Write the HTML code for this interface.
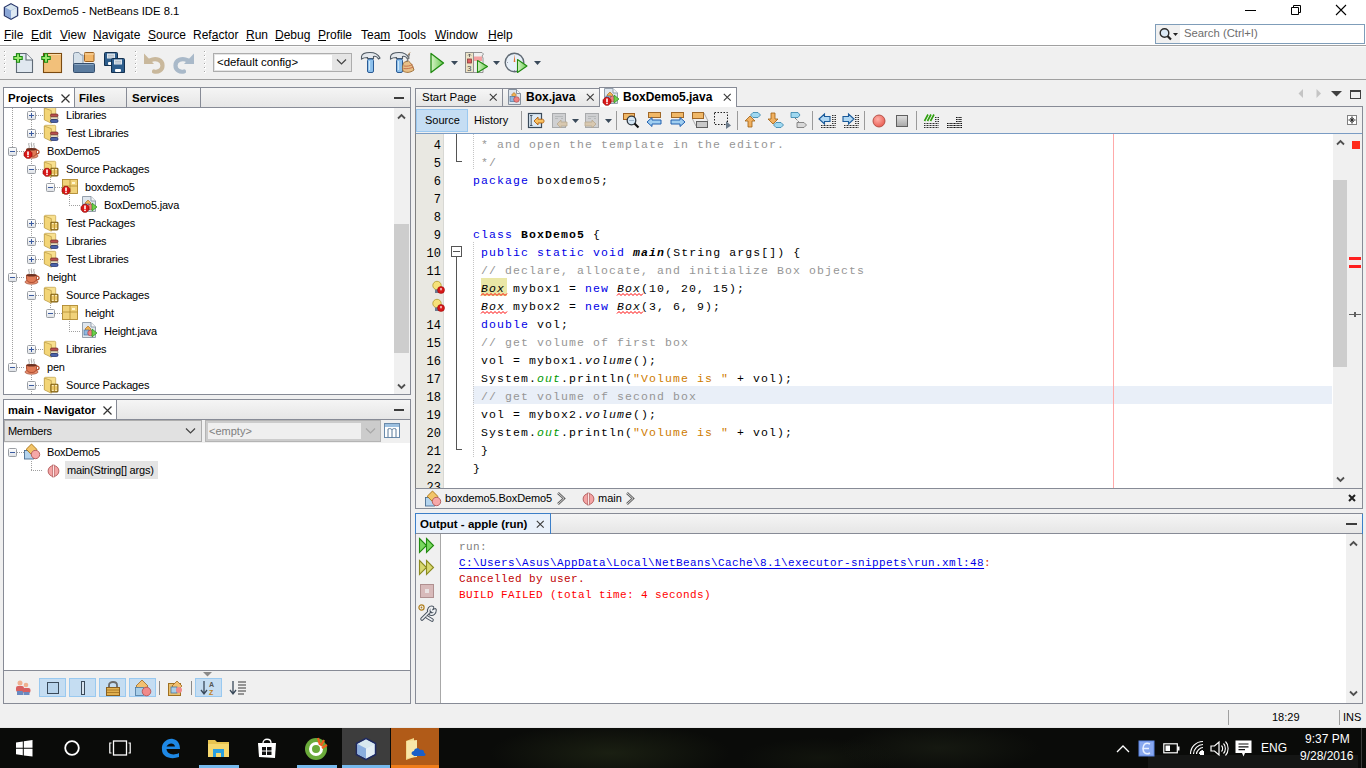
<!DOCTYPE html><html><head><meta charset="utf-8"><style>
*{margin:0;padding:0;box-sizing:border-box}
html,body{width:1366px;height:768px;overflow:hidden;background:#f0f0f0;font-family:"Liberation Sans",sans-serif;font-size:12px;color:#000}
.a{position:absolute}
.t{position:absolute;white-space:pre;line-height:14px;height:14px}
.b{font-weight:bold}
.u{text-decoration:underline}
.code{position:absolute;white-space:pre;font-family:"Liberation Mono",monospace;font-size:11.5px;letter-spacing:1.1px;line-height:18px;height:18px;padding-top:2px}
.out{position:absolute;white-space:pre;font-family:"Liberation Mono",monospace;font-size:11px;letter-spacing:0.4px;line-height:16px;height:16px}
.kw{color:#0000e6}
.cm{color:#969696}
.st{color:#ce7b00}
.fld{color:#009900;font-style:italic}
.ln{position:absolute;white-space:pre;font-family:"Liberation Mono",monospace;font-size:12px;letter-spacing:0px;line-height:18px;height:18px;padding-top:3px;text-align:right;width:26px;left:415px;color:#000}
.tree{font-size:11px;letter-spacing:-0.3px}
svg{position:absolute;overflow:visible}
</style></head><body>
<div class="a" style="left:0px;top:0px;width:1366px;height:45px;background:#fff"></div>
<svg style="left:3px;top:3px" width="16" height="17" viewBox="0 0 16 17"><path d="M8 0.8 L14.6 4.3 L14.6 12.7 L8 16.2 L1.4 12.7 L1.4 4.3 Z" fill="#9bb4d8" stroke="#2c3a6b" stroke-width="1.3"/><path d="M2.2 4.6 L8 7.6 L13.8 4.6 L8 1.6 Z" fill="#d6e4ee"/><path d="M8 7.8 L13.8 4.8 L13.8 12.3 L8 15.4Z" fill="#dfe9f2"/><path d="M2.2 4.8 L8 7.8 L8 15.4 L2.2 12.3Z" fill="#8aa6d6"/></svg>
<div class="t" style="left:23px;top:4px;font-size:11.3px;color:#000">BoxDemo5 - NetBeans IDE 8.1</div>
<div class="a" style="left:1245px;top:10px;width:11px;height:1px;background:#000"></div>
<svg style="left:1289px;top:4px" width="12" height="12" viewBox="0 0 12 12"><path d="M2.5 3.5 H9.5 V10.5 H2.5 Z M4.5 3.5 V1.5 H11.5 V8.5 H9.5" fill="none" stroke="#000" stroke-width="1"/></svg>
<svg style="left:1335px;top:4px" width="12" height="12" viewBox="0 0 12 12"><path d="M1 1 L11 11 M11 1 L1 11" stroke="#000" stroke-width="1.1"/></svg>
<div class="t" style="left:4px;top:28px;font-size:12px"><span class="u">F</span>ile</div>
<div class="t" style="left:31px;top:28px;font-size:12px"><span class="u">E</span>dit</div>
<div class="t" style="left:60px;top:28px;font-size:12px"><span class="u">V</span>iew</div>
<div class="t" style="left:93px;top:28px;font-size:12px"><span class="u">N</span>avigate</div>
<div class="t" style="left:148px;top:28px;font-size:12px"><span class="u">S</span>ource</div>
<div class="t" style="left:193px;top:28px;font-size:12px">Ref<span class="u">a</span>ctor</div>
<div class="t" style="left:246px;top:28px;font-size:12px"><span class="u">R</span>un</div>
<div class="t" style="left:275px;top:28px;font-size:12px"><span class="u">D</span>ebug</div>
<div class="t" style="left:318px;top:28px;font-size:12px"><span class="u">P</span>rofile</div>
<div class="t" style="left:361px;top:28px;font-size:12px">Tea<span class="u">m</span></div>
<div class="t" style="left:398px;top:28px;font-size:12px"><span class="u">T</span>ools</div>
<div class="t" style="left:435px;top:28px;font-size:12px"><span class="u">W</span>indow</div>
<div class="t" style="left:488px;top:28px;font-size:12px"><span class="u">H</span>elp</div>
<div class="a" style="left:1155px;top:24px;width:210px;height:20px;border:1px solid #7f9db9;background:#fff"></div>
<div class="a" style="left:1156px;top:25px;width:24px;height:18px;background:#f0f0f0"></div>
<svg style="left:1158px;top:27px" width="22" height="16" viewBox="0 0 22 16"><circle cx="6.5" cy="6" r="4.3" fill="#dce9f5" stroke="#2b2b2b" stroke-width="1.4"/><path d="M9.5 9 L13 12.5" stroke="#222" stroke-width="2.2"/><path d="M15 6 L20 6 L17.5 9 Z" fill="#222"/></svg>
<div class="t" style="left:1184px;top:26px;font-size:11.3px;color:#6d6d6d">Search (Ctrl+I)</div>
<div class="a" style="left:0px;top:45px;width:1366px;height:1px;background:#a0a0a0"></div>
<div class="a" style="left:0px;top:46px;width:1366px;height:33px;background:#f0f0f0"></div>
<div class="a" style="left:0px;top:46px;width:1366px;height:1px;background:#fafafa"></div>
<div class="a" style="left:0px;top:79px;width:1366px;height:1px;background:#a0a0a0"></div>
<div class="a" style="left:4px;top:51px;width:2px;height:2px;background:#a8a8a8;border-right:1px solid #fff;border-bottom:1px solid #fff;box-sizing:content-box;width:1px;height:1px"></div>
<div class="a" style="left:4px;top:55px;width:2px;height:2px;background:#a8a8a8;border-right:1px solid #fff;border-bottom:1px solid #fff;box-sizing:content-box;width:1px;height:1px"></div>
<div class="a" style="left:4px;top:59px;width:2px;height:2px;background:#a8a8a8;border-right:1px solid #fff;border-bottom:1px solid #fff;box-sizing:content-box;width:1px;height:1px"></div>
<div class="a" style="left:4px;top:63px;width:2px;height:2px;background:#a8a8a8;border-right:1px solid #fff;border-bottom:1px solid #fff;box-sizing:content-box;width:1px;height:1px"></div>
<div class="a" style="left:4px;top:67px;width:2px;height:2px;background:#a8a8a8;border-right:1px solid #fff;border-bottom:1px solid #fff;box-sizing:content-box;width:1px;height:1px"></div>
<div class="a" style="left:4px;top:71px;width:2px;height:2px;background:#a8a8a8;border-right:1px solid #fff;border-bottom:1px solid #fff;box-sizing:content-box;width:1px;height:1px"></div>
<div class="a" style="left:135px;top:51px;width:2px;height:2px;background:#a8a8a8;border-right:1px solid #fff;border-bottom:1px solid #fff;box-sizing:content-box;width:1px;height:1px"></div>
<div class="a" style="left:135px;top:55px;width:2px;height:2px;background:#a8a8a8;border-right:1px solid #fff;border-bottom:1px solid #fff;box-sizing:content-box;width:1px;height:1px"></div>
<div class="a" style="left:135px;top:59px;width:2px;height:2px;background:#a8a8a8;border-right:1px solid #fff;border-bottom:1px solid #fff;box-sizing:content-box;width:1px;height:1px"></div>
<div class="a" style="left:135px;top:63px;width:2px;height:2px;background:#a8a8a8;border-right:1px solid #fff;border-bottom:1px solid #fff;box-sizing:content-box;width:1px;height:1px"></div>
<div class="a" style="left:135px;top:67px;width:2px;height:2px;background:#a8a8a8;border-right:1px solid #fff;border-bottom:1px solid #fff;box-sizing:content-box;width:1px;height:1px"></div>
<div class="a" style="left:135px;top:71px;width:2px;height:2px;background:#a8a8a8;border-right:1px solid #fff;border-bottom:1px solid #fff;box-sizing:content-box;width:1px;height:1px"></div>
<div class="a" style="left:204px;top:51px;width:2px;height:2px;background:#a8a8a8;border-right:1px solid #fff;border-bottom:1px solid #fff;box-sizing:content-box;width:1px;height:1px"></div>
<div class="a" style="left:204px;top:55px;width:2px;height:2px;background:#a8a8a8;border-right:1px solid #fff;border-bottom:1px solid #fff;box-sizing:content-box;width:1px;height:1px"></div>
<div class="a" style="left:204px;top:59px;width:2px;height:2px;background:#a8a8a8;border-right:1px solid #fff;border-bottom:1px solid #fff;box-sizing:content-box;width:1px;height:1px"></div>
<div class="a" style="left:204px;top:63px;width:2px;height:2px;background:#a8a8a8;border-right:1px solid #fff;border-bottom:1px solid #fff;box-sizing:content-box;width:1px;height:1px"></div>
<div class="a" style="left:204px;top:67px;width:2px;height:2px;background:#a8a8a8;border-right:1px solid #fff;border-bottom:1px solid #fff;box-sizing:content-box;width:1px;height:1px"></div>
<div class="a" style="left:204px;top:71px;width:2px;height:2px;background:#a8a8a8;border-right:1px solid #fff;border-bottom:1px solid #fff;box-sizing:content-box;width:1px;height:1px"></div>
<svg style="left:13px;top:52px" width="22" height="22" viewBox="0 0 22 22"><path d="M3.5 1.5 H13 L19.5 8 V20.5 H3.5 Z" fill="#e0e8f0" stroke="#5f6a76" stroke-width="1.1"/><path d="M13 1.5 V8 H19.5" fill="#f4f7fa" stroke="#5f6a76" stroke-width="1.1"/><path d="M3.5 1.8 H6.5 V4.5 H9.2 V7.5 H6.5 V10.2 H3.5 V7.5 H0.8 V4.5 H3.5 Z" fill="#9ae870" stroke="#1a8a10" stroke-width="1.1"/></svg>
<svg style="left:41px;top:52px" width="22" height="22" viewBox="0 0 22 22"><rect x="2.5" y="1.5" width="18" height="19" fill="#f2c07a" stroke="#7a4a10" stroke-width="1.1"/><path d="M3 2.5 H20" stroke="#f8dcaa"/><path d="M3.5 1.8 H6.5 V4.5 H9.2 V7.5 H6.5 V10.2 H3.5 V7.5 H0.8 V4.5 H3.5 Z" fill="#9ae870" stroke="#1a8a10" stroke-width="1.1"/></svg>
<svg style="left:72px;top:51px" width="23" height="23" viewBox="0 0 23 23"><path d="M1.5 3.5 Q1.5 1.5 3.5 1.5 H7 L9 4 H11 V16 H1.5 Z" fill="#d6e1ea" stroke="#8494a6"/><rect x="12.5" y="1.5" width="9.5" height="9" rx="0.8" fill="#f2b668" stroke="#9a6020"/><path d="M12.5 3 H22" stroke="#f8d8a8"/><path d="M2.5 12.5 H21.5 Q22.5 12.5 22.5 13.5 V20.5 Q22.5 21.5 21.5 21.5 H2.5 Q1.5 21.5 1.5 20.5 V13.5 Q1.5 12.5 2.5 12.5Z" fill="#5b7c9f" stroke="#354f6e"/><path d="M2.5 13.5 H21.5" stroke="#8aa6c2"/></svg>
<svg style="left:103px;top:51px" width="24" height="24" viewBox="0 0 24 24"><path d="M1.5 2.5 Q1.5 1.5 2.5 1.5 H13.5 Q14.5 1.5 14.5 2.5 V14.5 H1.5Z" fill="#2d5d8c" stroke="#13304f"/><rect x="4" y="2.5" width="8" height="5" fill="#dfe7ee"/><path d="M5 4.3 H11 M5 6 H11" stroke="#9aa8b4" stroke-width="0.7"/><rect x="5" y="11" width="6" height="3" rx="1" fill="#fff"/><path d="M8.5 8.5 Q8.5 7.5 9.5 7.5 H20.5 Q21.5 7.5 21.5 8.5 V21.5 H8.5Z" fill="#2d5d8c" stroke="#13304f"/><rect x="11" y="8.5" width="8" height="5" fill="#dfe7ee"/><path d="M12 10.3 H18 M12 12 H18" stroke="#9aa8b4" stroke-width="0.7"/><rect x="12" y="18" width="6" height="3" rx="1" fill="#fff"/></svg>
<svg style="left:143px;top:52px" width="22" height="22" viewBox="0 0 22 22"><path d="M7 8.5 C13 5.5, 19.5 8, 19.5 13.5 C19.5 18, 15.5 20.5, 11 19.5" fill="none" stroke="#c9b89c" stroke-width="4.2" stroke-linecap="round"/><path d="M1 1.5 V12 H11 Z" fill="#c9b89c"/></svg>
<svg style="left:173px;top:52px" width="22" height="22" viewBox="0 0 22 22"><path d="M15 8.5 C9 5.5, 2.5 8, 2.5 13.5 C2.5 18, 6.5 20.5, 11 19.5" fill="none" stroke="#a9b9c9" stroke-width="4.2" stroke-linecap="round"/><path d="M21 1.5 V12 H11 Z" fill="#a9b9c9"/></svg>
<div class="a" style="left:213px;top:53px;width:139px;height:19px;border:1px solid #adadad;background:#e5e5e5"></div>
<div class="a" style="left:215px;top:55px;width:117px;height:15px;background:#fff"></div>
<div class="t" style="left:217px;top:55px;font-size:11.4px">&lt;default config&gt;</div>
<svg style="left:336px;top:58px" width="12" height="8" viewBox="0 0 12 8"><path d="M1 1.5 L5.5 6 L10 1.5" fill="none" stroke="#444" stroke-width="1.2"/></svg>
<svg style="left:360px;top:51px" width="22" height="23" viewBox="0 0 22 23"><path d="M1.5 5.5 C2 2.5, 6 1.5, 10 1.5 C14 1.5, 18 3, 20 7 L18.5 8 C17 5.5, 15 5, 13.5 5.5 L13.5 7.5 H7.5 L7.5 6.5 C5 6.5, 3 7, 1.5 8 Z" fill="#e4e8ec" stroke="#505a64" stroke-width="1.1"/><rect x="7.5" y="8" width="6" height="13.5" rx="1.5" fill="#8cc0ec" stroke="#2a5a94" stroke-width="1"/><path d="M9.5 10 V19" stroke="#d0e8f8" stroke-width="1.2"/></svg>
<svg style="left:389px;top:51px" width="26" height="23" viewBox="0 0 26 23"><path d="M1.5 5.5 C2 2.5, 6 1.5, 10 1.5 C14 1.5, 18 3, 20 7 L18.5 8 C17 5.5, 15 5, 13.5 5.5 L13.5 7.5 H7.5 L7.5 6.5 C5 6.5, 3 7, 1.5 8 Z" fill="#e4e8ec" stroke="#505a64" stroke-width="1.1"/><rect x="7.5" y="8" width="6" height="13.5" rx="1.5" fill="#8cc0ec" stroke="#2a5a94" stroke-width="1"/><path d="M9.5 10 V19" stroke="#d0e8f8" stroke-width="1.2"/><path d="M19 4 L21 1.5 M15.5 11 C14 12, 13 17, 14 20 C17 22, 21 22, 25 19 C24 15, 22 12, 19.5 10 Z" fill="#e8c088" stroke="#9a6a30" stroke-width="0.9"/><path d="M18 10.5 L20.5 3" stroke="#7a7a7a" stroke-width="1.3"/><path d="M15 15 C18 15.5, 21 15, 23.5 13.5 M14.5 17.5 C18 18, 21 17.5, 24.5 16" stroke="#c06040" stroke-width="0.8" fill="none"/></svg>
<svg style="left:429px;top:52px" width="16" height="22" viewBox="0 0 16 22"><defs><linearGradient id="rg" x1="0" y1="0" x2="1" y2="0"><stop offset="0" stop-color="#d8f4c8"/><stop offset="1" stop-color="#68c850"/></linearGradient></defs><path d="M2 1.5 L14.5 11 L2 20.5 Z" fill="url(#rg)" stroke="#1f8a10" stroke-width="1.3" stroke-linejoin="round"/></svg>
<svg style="left:451px;top:61px" width="7" height="5" viewBox="0 0 7 5"><path d="M0 0 H7 L3.5 4Z" fill="#3a4a5a"/></svg>
<svg style="left:464px;top:51px" width="26" height="23" viewBox="0 0 26 23"><path d="M1.5 1.5 H18 L19.5 3 L18 5 L19 7 V21.5 H1.5Z" fill="#f0f0f0" stroke="#8a8a8a" stroke-width="0.9"/><rect x="1.5" y="1.5" width="8" height="20" fill="#ece4c8" stroke="#8a8a8a" stroke-width="0.9"/><path d="M5.5 3 V6 M4 4.5 L5.5 3 L7 4.5" stroke="#555" stroke-width="0.8" fill="none"/><rect x="3.5" y="8" width="4" height="4" fill="#e06060" stroke="#8a3a3a" stroke-width="0.8"/><text x="3" y="20" font-size="8" font-family="Liberation Sans" fill="#444">3</text><path d="M10 5.5 H18 V10 H10Z" fill="#f4a0a0"/><path d="M13.5 9.5 L23.5 15.5 L13.5 21.5Z" fill="url(#rg)" stroke="#1f8a10" stroke-width="1.1" stroke-linejoin="round"/></svg>
<svg style="left:493px;top:61px" width="7" height="5" viewBox="0 0 7 5"><path d="M0 0 H7 L3.5 4Z" fill="#3a4a5a"/></svg>
<svg style="left:504px;top:51px" width="25" height="23" viewBox="0 0 25 23"><circle cx="10.5" cy="11.5" r="9.3" fill="#e8f0f8" stroke="#606a74" stroke-width="1.4"/><path d="M10.5 3.5 L9.7 11 H11.3 Z" fill="#e07030"/><path d="M3 11.5 H4 M17 11.5 H18 M10.5 19 V20" stroke="#889" stroke-width="0.8"/><path d="M13.5 8.5 L23 15 L13.5 21.5Z" fill="url(#rg)" stroke="#1f8a10" stroke-width="1.1" stroke-linejoin="round"/></svg>
<svg style="left:534px;top:61px" width="7" height="5" viewBox="0 0 7 5"><path d="M0 0 H7 L3.5 4Z" fill="#3a4a5a"/></svg>
<div class="a" style="left:3px;top:87px;width:408px;height:308px;border:1px solid #878b96;background:#fff"></div>
<div class="a" style="left:12px;top:108px;width:1px;height:259px;background:repeating-linear-gradient(180deg,#a0a0a0 0 1px,transparent 1px 2px)"></div>
<div class="a" style="left:31px;top:108px;width:1px;height:25px;background:repeating-linear-gradient(180deg,#a0a0a0 0 1px,transparent 1px 2px)"></div>
<div class="a" style="left:31px;top:155px;width:1px;height:104px;background:repeating-linear-gradient(180deg,#a0a0a0 0 1px,transparent 1px 2px)"></div>
<div class="a" style="left:50px;top:173px;width:1px;height:14px;background:repeating-linear-gradient(180deg,#a0a0a0 0 1px,transparent 1px 2px)"></div>
<div class="a" style="left:31px;top:281px;width:1px;height:68px;background:repeating-linear-gradient(180deg,#a0a0a0 0 1px,transparent 1px 2px)"></div>
<div class="a" style="left:50px;top:299px;width:1px;height:14px;background:repeating-linear-gradient(180deg,#a0a0a0 0 1px,transparent 1px 2px)"></div>
<div class="a" style="left:31px;top:371px;width:1px;height:23px;background:repeating-linear-gradient(180deg,#a0a0a0 0 1px,transparent 1px 2px)"></div>
<div class="a" style="left:36px;top:115px;width:7px;height:1px;background:repeating-linear-gradient(90deg,#a0a0a0 0 1px,transparent 1px 2px)"></div>
<svg style="left:43px;top:106px" width="17" height="17" viewBox="0 0 17 17"><rect x="1.5" y="1.3" width="11.2" height="12.5" rx="1" fill="#f8e08e" stroke="#c9a955" stroke-width="0.8"/><path d="M1.3 2 L8.3 4.6 V17.2 L1.3 13.8 Z" fill="#f3d577" stroke="#bf9f4a" stroke-width="0.8"/><rect x="7.5" y="8" width="7.5" height="3" rx="1.3" fill="#b85050" stroke="#6a2020" stroke-width="0.7"/><rect x="7.5" y="11" width="7.5" height="2.5" rx="1.1" fill="#e8dcc0" stroke="#7a6a4a" stroke-width="0.6"/><rect x="7.5" y="13.5" width="7.5" height="3" rx="1.3" fill="#4a62a8" stroke="#1a2a6a" stroke-width="0.7"/></svg>
<div class="t" style="left:66px;top:108px;font-size:11px;letter-spacing:-0.2px">Libraries</div>
<div class="a" style="left:36px;top:133px;width:7px;height:1px;background:repeating-linear-gradient(90deg,#a0a0a0 0 1px,transparent 1px 2px)"></div>
<svg style="left:43px;top:124px" width="17" height="17" viewBox="0 0 17 17"><rect x="1.5" y="1.3" width="11.2" height="12.5" rx="1" fill="#f8e08e" stroke="#c9a955" stroke-width="0.8"/><path d="M1.3 2 L8.3 4.6 V17.2 L1.3 13.8 Z" fill="#f3d577" stroke="#bf9f4a" stroke-width="0.8"/><rect x="7.5" y="8" width="7.5" height="3" rx="1.3" fill="#b85050" stroke="#6a2020" stroke-width="0.7"/><rect x="7.5" y="11" width="7.5" height="2.5" rx="1.1" fill="#e8dcc0" stroke="#7a6a4a" stroke-width="0.6"/><rect x="7.5" y="13.5" width="7.5" height="3" rx="1.3" fill="#4a62a8" stroke="#1a2a6a" stroke-width="0.7"/></svg>
<div class="t" style="left:66px;top:126px;font-size:11px;letter-spacing:-0.2px">Test Libraries</div>
<div class="a" style="left:17px;top:151px;width:7px;height:1px;background:repeating-linear-gradient(90deg,#a0a0a0 0 1px,transparent 1px 2px)"></div>
<svg style="left:24px;top:142px" width="17" height="17" viewBox="0 0 17 17"><ellipse cx="7.5" cy="14" rx="6.5" ry="2.2" fill="#e89070" stroke="#a04a30" stroke-width="0.7"/><path d="M2.5 7 H12.5 V10 C12.5 13.5,10.5 14.5,7.5 14.5 C4.5 14.5,2.5 13.5,2.5 10 Z" fill="#e07a55" stroke="#9a3a20" stroke-width="0.8"/><path d="M12.5 8 C16 8,16 12,12 12" fill="none" stroke="#b05030" stroke-width="1.3"/><ellipse cx="7.5" cy="7.2" rx="5" ry="1.3" fill="#6a3020"/><path d="M5 1 C4 3,6 4,5 6 M7.5 0.5 C6.5 2.5,8.5 3.5,7.5 5.5 M10 1 C9 3,11 4,10 6" fill="none" stroke="#8a8a8a" stroke-width="0.8"/><g transform="translate(0,8)"><path d="M2.5 0.3 H5.5 L8 2.8 V5.8 L5.5 8.3 H2.5 L0 5.8 V2.8 Z" fill="#d81818" stroke="#8a0000" stroke-width="0.6"/><rect x="3.2" y="1.5" width="1.6" height="3.6" fill="#fff"/><rect x="3.2" y="5.7" width="1.6" height="1.4" fill="#fff"/></g></svg>
<div class="t" style="left:47px;top:144px;font-size:11px;letter-spacing:-0.2px">BoxDemo5</div>
<div class="a" style="left:36px;top:169px;width:7px;height:1px;background:repeating-linear-gradient(90deg,#a0a0a0 0 1px,transparent 1px 2px)"></div>
<svg style="left:43px;top:160px" width="17" height="17" viewBox="0 0 17 17"><rect x="1.5" y="1.3" width="11.2" height="12.5" rx="1" fill="#f8e08e" stroke="#c9a955" stroke-width="0.8"/><path d="M1.3 2 L8.3 4.6 V17.2 L1.3 13.8 Z" fill="#f3d577" stroke="#bf9f4a" stroke-width="0.8"/><rect x="7.9" y="8.3" width="7" height="7.6" rx="0.8" fill="#ecc868" stroke="#7a5a10" stroke-width="1.1"/><path d="M11.4 8.5 V15.8" stroke="#a07a20" stroke-width="0.7"/><path d="M9 9.6 H10.6 M12.2 9.6 H14 M9 14.4 H10.6 M12.2 14.4 H14" stroke="#fff6d8" stroke-width="0.9"/><g transform="translate(0,8)"><path d="M2.5 0.3 H5.5 L8 2.8 V5.8 L5.5 8.3 H2.5 L0 5.8 V2.8 Z" fill="#d81818" stroke="#8a0000" stroke-width="0.6"/><rect x="3.2" y="1.5" width="1.6" height="3.6" fill="#fff"/><rect x="3.2" y="5.7" width="1.6" height="1.4" fill="#fff"/></g></svg>
<div class="t" style="left:66px;top:162px;font-size:11px;letter-spacing:-0.2px">Source Packages</div>
<div class="a" style="left:55px;top:187px;width:7px;height:1px;background:repeating-linear-gradient(90deg,#a0a0a0 0 1px,transparent 1px 2px)"></div>
<svg style="left:62px;top:178px" width="17" height="17" viewBox="0 0 17 17"><rect x="0.5" y="1.5" width="15" height="14" fill="#f0d27a" stroke="#b08a30" stroke-width="0.9"/><path d="M8 1.5 V15.5 M0.5 8 H15.5" stroke="#b08a30" stroke-width="0.8"/><rect x="10" y="4" width="3" height="2" fill="#fff6d0"/><g transform="translate(0,8)"><path d="M2.5 0.3 H5.5 L8 2.8 V5.8 L5.5 8.3 H2.5 L0 5.8 V2.8 Z" fill="#d81818" stroke="#8a0000" stroke-width="0.6"/><rect x="3.2" y="1.5" width="1.6" height="3.6" fill="#fff"/><rect x="3.2" y="5.7" width="1.6" height="1.4" fill="#fff"/></g></svg>
<div class="t" style="left:85px;top:180px;font-size:11px;letter-spacing:-0.2px">boxdemo5</div>
<div class="a" style="left:69px;top:195px;width:1px;height:10px;background:repeating-linear-gradient(180deg,#a0a0a0 0 1px,transparent 1px 2px)"></div>
<div class="a" style="left:69px;top:205px;width:11px;height:1px;background:repeating-linear-gradient(90deg,#a0a0a0 0 1px,transparent 1px 2px)"></div>
<svg style="left:81px;top:196px" width="17" height="17" viewBox="0 0 17 17"><path d="M1.5 0.5 H10 L14.5 5 V15.5 H1.5 Z" fill="#dfe6ee" stroke="#8a96a4" stroke-width="0.9"/><path d="M10 0.5 V5 H14.5" fill="#f4f6f8" stroke="#8a96a4" stroke-width="0.9"/><path d="M7 4 L10 7 L7 10 L4 7Z" fill="#f0b050" stroke="#a06010" stroke-width="0.6"/><rect x="3" y="8" width="5" height="5" fill="#90b8e0" stroke="#406890" stroke-width="0.6"/><circle cx="9.5" cy="11" r="2.8" fill="#f08080" stroke="#a04040" stroke-width="0.6"/><path d="M11 7 L16 11 L11 15Z" fill="#6fd04a" stroke="#2a8a1a" stroke-width="0.7"/><g transform="translate(0,8)"><path d="M2.5 0.3 H5.5 L8 2.8 V5.8 L5.5 8.3 H2.5 L0 5.8 V2.8 Z" fill="#d81818" stroke="#8a0000" stroke-width="0.6"/><rect x="3.2" y="1.5" width="1.6" height="3.6" fill="#fff"/><rect x="3.2" y="5.7" width="1.6" height="1.4" fill="#fff"/></g></svg>
<div class="t" style="left:104px;top:198px;font-size:11px;letter-spacing:-0.2px">BoxDemo5.java</div>
<div class="a" style="left:36px;top:223px;width:7px;height:1px;background:repeating-linear-gradient(90deg,#a0a0a0 0 1px,transparent 1px 2px)"></div>
<svg style="left:43px;top:214px" width="17" height="17" viewBox="0 0 17 17"><rect x="1.5" y="1.3" width="11.2" height="12.5" rx="1" fill="#f8e08e" stroke="#c9a955" stroke-width="0.8"/><path d="M1.3 2 L8.3 4.6 V17.2 L1.3 13.8 Z" fill="#f3d577" stroke="#bf9f4a" stroke-width="0.8"/><rect x="7.9" y="8.3" width="7" height="7.6" rx="0.8" fill="#ecc868" stroke="#7a5a10" stroke-width="1.1"/><path d="M11.4 8.5 V15.8" stroke="#a07a20" stroke-width="0.7"/><path d="M9 9.6 H10.6 M12.2 9.6 H14 M9 14.4 H10.6 M12.2 14.4 H14" stroke="#fff6d8" stroke-width="0.9"/></svg>
<div class="t" style="left:66px;top:216px;font-size:11px;letter-spacing:-0.2px">Test Packages</div>
<div class="a" style="left:36px;top:241px;width:7px;height:1px;background:repeating-linear-gradient(90deg,#a0a0a0 0 1px,transparent 1px 2px)"></div>
<svg style="left:43px;top:232px" width="17" height="17" viewBox="0 0 17 17"><rect x="1.5" y="1.3" width="11.2" height="12.5" rx="1" fill="#f8e08e" stroke="#c9a955" stroke-width="0.8"/><path d="M1.3 2 L8.3 4.6 V17.2 L1.3 13.8 Z" fill="#f3d577" stroke="#bf9f4a" stroke-width="0.8"/><rect x="7.5" y="8" width="7.5" height="3" rx="1.3" fill="#b85050" stroke="#6a2020" stroke-width="0.7"/><rect x="7.5" y="11" width="7.5" height="2.5" rx="1.1" fill="#e8dcc0" stroke="#7a6a4a" stroke-width="0.6"/><rect x="7.5" y="13.5" width="7.5" height="3" rx="1.3" fill="#4a62a8" stroke="#1a2a6a" stroke-width="0.7"/></svg>
<div class="t" style="left:66px;top:234px;font-size:11px;letter-spacing:-0.2px">Libraries</div>
<div class="a" style="left:36px;top:259px;width:7px;height:1px;background:repeating-linear-gradient(90deg,#a0a0a0 0 1px,transparent 1px 2px)"></div>
<svg style="left:43px;top:250px" width="17" height="17" viewBox="0 0 17 17"><rect x="1.5" y="1.3" width="11.2" height="12.5" rx="1" fill="#f8e08e" stroke="#c9a955" stroke-width="0.8"/><path d="M1.3 2 L8.3 4.6 V17.2 L1.3 13.8 Z" fill="#f3d577" stroke="#bf9f4a" stroke-width="0.8"/><rect x="7.5" y="8" width="7.5" height="3" rx="1.3" fill="#b85050" stroke="#6a2020" stroke-width="0.7"/><rect x="7.5" y="11" width="7.5" height="2.5" rx="1.1" fill="#e8dcc0" stroke="#7a6a4a" stroke-width="0.6"/><rect x="7.5" y="13.5" width="7.5" height="3" rx="1.3" fill="#4a62a8" stroke="#1a2a6a" stroke-width="0.7"/></svg>
<div class="t" style="left:66px;top:252px;font-size:11px;letter-spacing:-0.2px">Test Libraries</div>
<div class="a" style="left:17px;top:277px;width:7px;height:1px;background:repeating-linear-gradient(90deg,#a0a0a0 0 1px,transparent 1px 2px)"></div>
<svg style="left:24px;top:268px" width="17" height="17" viewBox="0 0 17 17"><ellipse cx="7.5" cy="14" rx="6.5" ry="2.2" fill="#e89070" stroke="#a04a30" stroke-width="0.7"/><path d="M2.5 7 H12.5 V10 C12.5 13.5,10.5 14.5,7.5 14.5 C4.5 14.5,2.5 13.5,2.5 10 Z" fill="#e07a55" stroke="#9a3a20" stroke-width="0.8"/><path d="M12.5 8 C16 8,16 12,12 12" fill="none" stroke="#b05030" stroke-width="1.3"/><ellipse cx="7.5" cy="7.2" rx="5" ry="1.3" fill="#6a3020"/><path d="M5 1 C4 3,6 4,5 6 M7.5 0.5 C6.5 2.5,8.5 3.5,7.5 5.5 M10 1 C9 3,11 4,10 6" fill="none" stroke="#8a8a8a" stroke-width="0.8"/></svg>
<div class="t" style="left:47px;top:270px;font-size:11px;letter-spacing:-0.2px">height</div>
<div class="a" style="left:36px;top:295px;width:7px;height:1px;background:repeating-linear-gradient(90deg,#a0a0a0 0 1px,transparent 1px 2px)"></div>
<svg style="left:43px;top:286px" width="17" height="17" viewBox="0 0 17 17"><rect x="1.5" y="1.3" width="11.2" height="12.5" rx="1" fill="#f8e08e" stroke="#c9a955" stroke-width="0.8"/><path d="M1.3 2 L8.3 4.6 V17.2 L1.3 13.8 Z" fill="#f3d577" stroke="#bf9f4a" stroke-width="0.8"/><rect x="7.9" y="8.3" width="7" height="7.6" rx="0.8" fill="#ecc868" stroke="#7a5a10" stroke-width="1.1"/><path d="M11.4 8.5 V15.8" stroke="#a07a20" stroke-width="0.7"/><path d="M9 9.6 H10.6 M12.2 9.6 H14 M9 14.4 H10.6 M12.2 14.4 H14" stroke="#fff6d8" stroke-width="0.9"/></svg>
<div class="t" style="left:66px;top:288px;font-size:11px;letter-spacing:-0.2px">Source Packages</div>
<div class="a" style="left:55px;top:313px;width:7px;height:1px;background:repeating-linear-gradient(90deg,#a0a0a0 0 1px,transparent 1px 2px)"></div>
<svg style="left:62px;top:304px" width="17" height="17" viewBox="0 0 17 17"><rect x="0.5" y="1.5" width="15" height="14" fill="#f0d27a" stroke="#b08a30" stroke-width="0.9"/><path d="M8 1.5 V15.5 M0.5 8 H15.5" stroke="#b08a30" stroke-width="0.8"/><rect x="10" y="4" width="3" height="2" fill="#fff6d0"/></svg>
<div class="t" style="left:85px;top:306px;font-size:11px;letter-spacing:-0.2px">height</div>
<div class="a" style="left:69px;top:321px;width:1px;height:10px;background:repeating-linear-gradient(180deg,#a0a0a0 0 1px,transparent 1px 2px)"></div>
<div class="a" style="left:69px;top:331px;width:11px;height:1px;background:repeating-linear-gradient(90deg,#a0a0a0 0 1px,transparent 1px 2px)"></div>
<svg style="left:81px;top:322px" width="17" height="17" viewBox="0 0 17 17"><path d="M1.5 0.5 H10 L14.5 5 V15.5 H1.5 Z" fill="#dfe6ee" stroke="#8a96a4" stroke-width="0.9"/><path d="M10 0.5 V5 H14.5" fill="#f4f6f8" stroke="#8a96a4" stroke-width="0.9"/><path d="M7 4 L10 7 L7 10 L4 7Z" fill="#f0b050" stroke="#a06010" stroke-width="0.6"/><rect x="3" y="8" width="5" height="5" fill="#90b8e0" stroke="#406890" stroke-width="0.6"/><circle cx="9.5" cy="11" r="2.8" fill="#f08080" stroke="#a04040" stroke-width="0.6"/><path d="M11 7 L16 11 L11 15Z" fill="#6fd04a" stroke="#2a8a1a" stroke-width="0.7"/></svg>
<div class="t" style="left:104px;top:324px;font-size:11px;letter-spacing:-0.2px">Height.java</div>
<div class="a" style="left:36px;top:349px;width:7px;height:1px;background:repeating-linear-gradient(90deg,#a0a0a0 0 1px,transparent 1px 2px)"></div>
<svg style="left:43px;top:340px" width="17" height="17" viewBox="0 0 17 17"><rect x="1.5" y="1.3" width="11.2" height="12.5" rx="1" fill="#f8e08e" stroke="#c9a955" stroke-width="0.8"/><path d="M1.3 2 L8.3 4.6 V17.2 L1.3 13.8 Z" fill="#f3d577" stroke="#bf9f4a" stroke-width="0.8"/><rect x="7.5" y="8" width="7.5" height="3" rx="1.3" fill="#b85050" stroke="#6a2020" stroke-width="0.7"/><rect x="7.5" y="11" width="7.5" height="2.5" rx="1.1" fill="#e8dcc0" stroke="#7a6a4a" stroke-width="0.6"/><rect x="7.5" y="13.5" width="7.5" height="3" rx="1.3" fill="#4a62a8" stroke="#1a2a6a" stroke-width="0.7"/></svg>
<div class="t" style="left:66px;top:342px;font-size:11px;letter-spacing:-0.2px">Libraries</div>
<div class="a" style="left:17px;top:367px;width:7px;height:1px;background:repeating-linear-gradient(90deg,#a0a0a0 0 1px,transparent 1px 2px)"></div>
<svg style="left:24px;top:358px" width="17" height="17" viewBox="0 0 17 17"><ellipse cx="7.5" cy="14" rx="6.5" ry="2.2" fill="#e89070" stroke="#a04a30" stroke-width="0.7"/><path d="M2.5 7 H12.5 V10 C12.5 13.5,10.5 14.5,7.5 14.5 C4.5 14.5,2.5 13.5,2.5 10 Z" fill="#e07a55" stroke="#9a3a20" stroke-width="0.8"/><path d="M12.5 8 C16 8,16 12,12 12" fill="none" stroke="#b05030" stroke-width="1.3"/><ellipse cx="7.5" cy="7.2" rx="5" ry="1.3" fill="#6a3020"/><path d="M5 1 C4 3,6 4,5 6 M7.5 0.5 C6.5 2.5,8.5 3.5,7.5 5.5 M10 1 C9 3,11 4,10 6" fill="none" stroke="#8a8a8a" stroke-width="0.8"/></svg>
<div class="t" style="left:47px;top:360px;font-size:11px;letter-spacing:-0.2px">pen</div>
<div class="a" style="left:36px;top:385px;width:7px;height:1px;background:repeating-linear-gradient(90deg,#a0a0a0 0 1px,transparent 1px 2px)"></div>
<svg style="left:43px;top:376px" width="17" height="17" viewBox="0 0 17 17"><rect x="1.5" y="1.3" width="11.2" height="12.5" rx="1" fill="#f8e08e" stroke="#c9a955" stroke-width="0.8"/><path d="M1.3 2 L8.3 4.6 V17.2 L1.3 13.8 Z" fill="#f3d577" stroke="#bf9f4a" stroke-width="0.8"/><rect x="7.9" y="8.3" width="7" height="7.6" rx="0.8" fill="#ecc868" stroke="#7a5a10" stroke-width="1.1"/><path d="M11.4 8.5 V15.8" stroke="#a07a20" stroke-width="0.7"/><path d="M9 9.6 H10.6 M12.2 9.6 H14 M9 14.4 H10.6 M12.2 14.4 H14" stroke="#fff6d8" stroke-width="0.9"/></svg>
<div class="t" style="left:66px;top:378px;font-size:11px;letter-spacing:-0.2px">Source Packages</div>
<svg style="left:27px;top:111px" width="9" height="9" viewBox="0 0 9 9"><defs><linearGradient id="eg" x1="0" y1="0" x2="0" y2="1"><stop offset="0" stop-color="#fff"/><stop offset="1" stop-color="#dde1e6"/></linearGradient></defs><rect x="0.5" y="0.5" width="8" height="8" rx="1" fill="url(#eg)" stroke="#9a9ea4"/><path d="M2 4.5 H7" stroke="#3b5ba0" stroke-width="1"/><path d="M4.5 2 V7" stroke="#3b5ba0" stroke-width="1"/></svg>
<svg style="left:27px;top:129px" width="9" height="9" viewBox="0 0 9 9"><defs><linearGradient id="eg" x1="0" y1="0" x2="0" y2="1"><stop offset="0" stop-color="#fff"/><stop offset="1" stop-color="#dde1e6"/></linearGradient></defs><rect x="0.5" y="0.5" width="8" height="8" rx="1" fill="url(#eg)" stroke="#9a9ea4"/><path d="M2 4.5 H7" stroke="#3b5ba0" stroke-width="1"/><path d="M4.5 2 V7" stroke="#3b5ba0" stroke-width="1"/></svg>
<svg style="left:8px;top:147px" width="9" height="9" viewBox="0 0 9 9"><defs><linearGradient id="eg" x1="0" y1="0" x2="0" y2="1"><stop offset="0" stop-color="#fff"/><stop offset="1" stop-color="#dde1e6"/></linearGradient></defs><rect x="0.5" y="0.5" width="8" height="8" rx="1" fill="url(#eg)" stroke="#9a9ea4"/><path d="M2 4.5 H7" stroke="#3b5ba0" stroke-width="1"/></svg>
<svg style="left:27px;top:165px" width="9" height="9" viewBox="0 0 9 9"><defs><linearGradient id="eg" x1="0" y1="0" x2="0" y2="1"><stop offset="0" stop-color="#fff"/><stop offset="1" stop-color="#dde1e6"/></linearGradient></defs><rect x="0.5" y="0.5" width="8" height="8" rx="1" fill="url(#eg)" stroke="#9a9ea4"/><path d="M2 4.5 H7" stroke="#3b5ba0" stroke-width="1"/></svg>
<svg style="left:46px;top:183px" width="9" height="9" viewBox="0 0 9 9"><defs><linearGradient id="eg" x1="0" y1="0" x2="0" y2="1"><stop offset="0" stop-color="#fff"/><stop offset="1" stop-color="#dde1e6"/></linearGradient></defs><rect x="0.5" y="0.5" width="8" height="8" rx="1" fill="url(#eg)" stroke="#9a9ea4"/><path d="M2 4.5 H7" stroke="#3b5ba0" stroke-width="1"/></svg>
<svg style="left:27px;top:219px" width="9" height="9" viewBox="0 0 9 9"><defs><linearGradient id="eg" x1="0" y1="0" x2="0" y2="1"><stop offset="0" stop-color="#fff"/><stop offset="1" stop-color="#dde1e6"/></linearGradient></defs><rect x="0.5" y="0.5" width="8" height="8" rx="1" fill="url(#eg)" stroke="#9a9ea4"/><path d="M2 4.5 H7" stroke="#3b5ba0" stroke-width="1"/><path d="M4.5 2 V7" stroke="#3b5ba0" stroke-width="1"/></svg>
<svg style="left:27px;top:237px" width="9" height="9" viewBox="0 0 9 9"><defs><linearGradient id="eg" x1="0" y1="0" x2="0" y2="1"><stop offset="0" stop-color="#fff"/><stop offset="1" stop-color="#dde1e6"/></linearGradient></defs><rect x="0.5" y="0.5" width="8" height="8" rx="1" fill="url(#eg)" stroke="#9a9ea4"/><path d="M2 4.5 H7" stroke="#3b5ba0" stroke-width="1"/><path d="M4.5 2 V7" stroke="#3b5ba0" stroke-width="1"/></svg>
<svg style="left:27px;top:255px" width="9" height="9" viewBox="0 0 9 9"><defs><linearGradient id="eg" x1="0" y1="0" x2="0" y2="1"><stop offset="0" stop-color="#fff"/><stop offset="1" stop-color="#dde1e6"/></linearGradient></defs><rect x="0.5" y="0.5" width="8" height="8" rx="1" fill="url(#eg)" stroke="#9a9ea4"/><path d="M2 4.5 H7" stroke="#3b5ba0" stroke-width="1"/><path d="M4.5 2 V7" stroke="#3b5ba0" stroke-width="1"/></svg>
<svg style="left:8px;top:273px" width="9" height="9" viewBox="0 0 9 9"><defs><linearGradient id="eg" x1="0" y1="0" x2="0" y2="1"><stop offset="0" stop-color="#fff"/><stop offset="1" stop-color="#dde1e6"/></linearGradient></defs><rect x="0.5" y="0.5" width="8" height="8" rx="1" fill="url(#eg)" stroke="#9a9ea4"/><path d="M2 4.5 H7" stroke="#3b5ba0" stroke-width="1"/></svg>
<svg style="left:27px;top:291px" width="9" height="9" viewBox="0 0 9 9"><defs><linearGradient id="eg" x1="0" y1="0" x2="0" y2="1"><stop offset="0" stop-color="#fff"/><stop offset="1" stop-color="#dde1e6"/></linearGradient></defs><rect x="0.5" y="0.5" width="8" height="8" rx="1" fill="url(#eg)" stroke="#9a9ea4"/><path d="M2 4.5 H7" stroke="#3b5ba0" stroke-width="1"/></svg>
<svg style="left:46px;top:309px" width="9" height="9" viewBox="0 0 9 9"><defs><linearGradient id="eg" x1="0" y1="0" x2="0" y2="1"><stop offset="0" stop-color="#fff"/><stop offset="1" stop-color="#dde1e6"/></linearGradient></defs><rect x="0.5" y="0.5" width="8" height="8" rx="1" fill="url(#eg)" stroke="#9a9ea4"/><path d="M2 4.5 H7" stroke="#3b5ba0" stroke-width="1"/></svg>
<svg style="left:27px;top:345px" width="9" height="9" viewBox="0 0 9 9"><defs><linearGradient id="eg" x1="0" y1="0" x2="0" y2="1"><stop offset="0" stop-color="#fff"/><stop offset="1" stop-color="#dde1e6"/></linearGradient></defs><rect x="0.5" y="0.5" width="8" height="8" rx="1" fill="url(#eg)" stroke="#9a9ea4"/><path d="M2 4.5 H7" stroke="#3b5ba0" stroke-width="1"/><path d="M4.5 2 V7" stroke="#3b5ba0" stroke-width="1"/></svg>
<svg style="left:8px;top:363px" width="9" height="9" viewBox="0 0 9 9"><defs><linearGradient id="eg" x1="0" y1="0" x2="0" y2="1"><stop offset="0" stop-color="#fff"/><stop offset="1" stop-color="#dde1e6"/></linearGradient></defs><rect x="0.5" y="0.5" width="8" height="8" rx="1" fill="url(#eg)" stroke="#9a9ea4"/><path d="M2 4.5 H7" stroke="#3b5ba0" stroke-width="1"/></svg>
<svg style="left:27px;top:381px" width="9" height="9" viewBox="0 0 9 9"><defs><linearGradient id="eg" x1="0" y1="0" x2="0" y2="1"><stop offset="0" stop-color="#fff"/><stop offset="1" stop-color="#dde1e6"/></linearGradient></defs><rect x="0.5" y="0.5" width="8" height="8" rx="1" fill="url(#eg)" stroke="#9a9ea4"/><path d="M2 4.5 H7" stroke="#3b5ba0" stroke-width="1"/></svg>
<div class="a" style="left:3px;top:87px;width:408px;height:21px;border:1px solid #878b96;background:linear-gradient(#f5f5f5,#e6e6e6)"></div>
<div class="a" style="left:4px;top:88px;width:70px;height:19px;background:#fff"></div>
<div class="a" style="left:74px;top:88px;width:1px;height:19px;background:#878b96"></div>
<div class="a" style="left:126px;top:88px;width:1px;height:19px;background:#878b96"></div>
<div class="a" style="left:200px;top:88px;width:1px;height:19px;background:#878b96"></div>
<div class="t" style="left:8px;top:91px;font-size:11.5px;font-weight:bold">Projects</div>
<svg style="left:61px;top:94px" width="9" height="9" viewBox="0 0 9 9"><path d="M0.5 0.5 L8.5 8.5 M8.5 0.5 L0.5 8.5" stroke="#333" stroke-width="1.2"/></svg>
<div class="t" style="left:79px;top:91px;font-size:11.5px;font-weight:bold">Files</div>
<div class="t" style="left:132px;top:91px;font-size:11.5px;font-weight:bold">Services</div>
<div class="a" style="left:394px;top:97px;width:10px;height:2px;background:#3c3c3c"></div>
<div class="a" style="left:394px;top:108px;width:16px;height:286px;background:#f0f0f0"></div>
<div class="a" style="left:394px;top:224px;width:15px;height:129px;background:#cdcdcd"></div>
<svg style="left:397px;top:113px" width="10" height="7" viewBox="0 0 10 7"><path d="M1 5.5 L4.5 2 L8 5.5" fill="none" stroke="#505050" stroke-width="1.8"/></svg>
<svg style="left:397px;top:383px" width="10" height="7" viewBox="0 0 10 7"><path d="M1 1.5 L4.5 5 L8 1.5" fill="none" stroke="#505050" stroke-width="1.8"/></svg>
<div class="a" style="left:3px;top:87px;width:408px;height:308px;border:1px solid #878b96"></div>
<div class="a" style="left:3px;top:399px;width:408px;height:305px;border:1px solid #878b96;background:#fff"></div>
<div class="a" style="left:3px;top:399px;width:408px;height:21px;border:1px solid #878b96;background:linear-gradient(#f5f5f5,#e6e6e6)"></div>
<div class="a" style="left:4px;top:400px;width:112px;height:19px;background:#fff"></div>
<div class="a" style="left:116px;top:400px;width:1px;height:19px;background:#878b96"></div>
<div class="t" style="left:8px;top:403px;font-size:11.2px;font-weight:bold">main - Navigator</div>
<svg style="left:103px;top:406px" width="9" height="9" viewBox="0 0 9 9"><path d="M0.5 0.5 L8.5 8.5 M8.5 0.5 L0.5 8.5" stroke="#333" stroke-width="1.2"/></svg>
<div class="a" style="left:394px;top:409px;width:10px;height:2px;background:#3c3c3c"></div>
<div class="a" style="left:4px;top:420px;width:406px;height:23px;background:#f0f0f0"></div>
<div class="a" style="left:4px;top:420px;width:198px;height:22px;border:1px solid #adadad;background:#e1e1e1"></div>
<div class="t" style="left:8px;top:424px;font-size:11px;letter-spacing:-0.3px">Members</div>
<svg style="left:185px;top:427px" width="12" height="8" viewBox="0 0 12 8"><path d="M1 1.5 L5.5 6 L10 1.5" fill="none" stroke="#444" stroke-width="1.2"/></svg>
<div class="a" style="left:205px;top:420px;width:176px;height:22px;border:1px solid #b4b4b4;background:#cccccc"></div>
<div class="a" style="left:208px;top:423px;width:153px;height:16px;background:#efefef"></div>
<div class="t" style="left:209px;top:424px;font-size:11px;color:#808080">&lt;empty&gt;</div>
<svg style="left:365px;top:427px" width="12" height="8" viewBox="0 0 12 8"><path d="M1 1.5 L5.5 6 L10 1.5" fill="none" stroke="#a8a8a8" stroke-width="1.2"/></svg>
<svg style="left:384px;top:423px" width="17" height="16" viewBox="0 0 17 16"><rect x="0.5" y="0.5" width="15" height="14" fill="#fff" stroke="#6a8aaa"/><rect x="1" y="1" width="14" height="3" fill="#9cc0e0"/><path d="M4 6 V14 M12 6 V14 M8 7 V15" stroke="#5a7a9a"/><path d="M4 6 C6 5,8 6,8 7 C8 6,10 5,12 6" fill="none" stroke="#5a7a9a"/></svg>
<div class="a" style="left:17px;top:452px;width:7px;height:1px;background:repeating-linear-gradient(90deg,#a0a0a0 0 1px,transparent 1px 2px)"></div>
<div class="a" style="left:31px;top:461px;width:1px;height:9px;background:repeating-linear-gradient(180deg,#a0a0a0 0 1px,transparent 1px 2px)"></div>
<div class="a" style="left:31px;top:470px;width:11px;height:1px;background:repeating-linear-gradient(90deg,#a0a0a0 0 1px,transparent 1px 2px)"></div>
<svg style="left:8px;top:448px" width="9" height="9" viewBox="0 0 9 9"><defs><linearGradient id="eg" x1="0" y1="0" x2="0" y2="1"><stop offset="0" stop-color="#fff"/><stop offset="1" stop-color="#dde1e6"/></linearGradient></defs><rect x="0.5" y="0.5" width="8" height="8" rx="1" fill="url(#eg)" stroke="#9a9ea4"/><path d="M2 4.5 H7" stroke="#3b5ba0" stroke-width="1"/></svg>
<svg style="left:24px;top:443px" width="17" height="17" viewBox="0 0 17 17"><rect x="0.5" y="7.5" width="9" height="8.5" fill="#b4d4ee" stroke="#4a6e92" stroke-width="0.9"/><path d="M7.5 1 L12.8 6.3 L7.5 11.6 L2.2 6.3Z" fill="#f2c468" stroke="#a87010" stroke-width="0.9"/><circle cx="11.5" cy="11.5" r="4.2" fill="#f6a8a8" stroke="#b05858" stroke-width="0.9"/></svg>
<div class="t" style="left:47px;top:445px;font-size:11px;letter-spacing:-0.2px">BoxDemo5</div>
<svg style="left:47px;top:464px" width="13" height="13" viewBox="0 0 13 13"><circle cx="6.5" cy="7" r="5.4" fill="#f4a4a4" stroke="#b05858" stroke-width="0.9"/><rect x="5.6" y="1" width="1.8" height="12" fill="#fde6e6" stroke="#b05858" stroke-width="0.6"/></svg>
<div class="a" style="left:65px;top:461px;width:93px;height:18px;background:#e4e4e4"></div>
<div class="t" style="left:67px;top:463px;font-size:11px;letter-spacing:-0.2px">main(String[] args)</div>
<div class="a" style="left:4px;top:670px;width:406px;height:1px;background:#878b96"></div>
<div class="a" style="left:4px;top:671px;width:406px;height:32px;background:#f0f0f0"></div>
<div class="a" style="left:39px;top:678px;width:27px;height:19px;border:1px solid #99c9f0;background:#c5ddf2"></div>
<div class="a" style="left:69px;top:678px;width:27px;height:19px;border:1px solid #99c9f0;background:#c5ddf2"></div>
<div class="a" style="left:99px;top:678px;width:27px;height:19px;border:1px solid #99c9f0;background:#c5ddf2"></div>
<div class="a" style="left:129px;top:678px;width:27px;height:19px;border:1px solid #99c9f0;background:#c5ddf2"></div>
<div class="a" style="left:195px;top:678px;width:27px;height:19px;border:1px solid #99c9f0;background:#c5ddf2"></div>
<svg style="left:14px;top:680px" width="18" height="16" viewBox="0 0 18 16"><circle cx="6" cy="3" r="2.5" fill="#f0b090"/><rect x="2" y="6" width="8" height="6" rx="2" fill="#d86060"/><rect x="3" y="11" width="6" height="4" fill="#6a8ac0"/><circle cx="12" cy="5" r="2.3" fill="#f0b090"/><rect x="8.5" y="8" width="8" height="5" rx="2" fill="#d86060"/><rect x="9.5" y="12" width="6" height="3" fill="#6a8ac0"/></svg>
<svg style="left:46px;top:681px" width="14" height="14" viewBox="0 0 14 14"><rect x="1.5" y="1.5" width="11" height="11" fill="#b8d4ec" stroke="#3a4a5a" stroke-width="1"/></svg>
<svg style="left:80px;top:681px" width="6" height="14" viewBox="0 0 6 14"><rect x="1.5" y="0.5" width="3" height="13" fill="#d8e4f0" stroke="#3a4a5a" stroke-width="1"/></svg>
<svg style="left:105px;top:680px" width="16" height="16" viewBox="0 0 16 16"><path d="M4 8 V5 C4 1,12 1,12 5 V8" fill="none" stroke="#6a6a6a" stroke-width="1.8"/><rect x="1.5" y="7.5" width="13" height="8" fill="#e0b050" stroke="#8a6020"/><path d="M2 10 H14 M2 12.5 H14" stroke="#a07020" stroke-width="0.8"/></svg>
<svg style="left:134px;top:679px" width="18" height="18" viewBox="0 0 18 18"><path d="M8 1 L14 7 L8 13 L2 7 Z" fill="#f2c070" stroke="#a06a20" stroke-width="0.8"/><rect x="1.5" y="8.5" width="8" height="8" fill="#a8cde8" stroke="#4a78a0" stroke-width="0.8"/><circle cx="12.5" cy="12.5" r="4.3" fill="#f08a8a" stroke="#b04848" stroke-width="0.8"/></svg>
<div class="a" style="left:159px;top:681px;width:1px;height:14px;background:#8a8a8a"></div>
<svg style="left:167px;top:680px" width="17" height="16" viewBox="0 0 17 16"><rect x="1.5" y="3.5" width="12" height="12" fill="#e8c070" stroke="#a07020"/><path d="M10 1 L15 6 L10 11 L5 6 Z" fill="#f2c070" stroke="#a06a20" stroke-width="0.8"/><rect x="4" y="7" width="6" height="6" fill="#a8cde8" stroke="#4a78a0" stroke-width="0.8"/><circle cx="12" cy="10" r="3" fill="#f08a8a"/></svg>
<div class="a" style="left:191px;top:681px;width:1px;height:14px;background:#8a8a8a"></div>
<svg style="left:203px;top:672px" width="9" height="5" viewBox="0 0 9 5"><path d="M0 0 H9 L4.5 4.5 Z" fill="#8a8a8a"/></svg>
<svg style="left:200px;top:680px" width="18" height="16" viewBox="0 0 18 16"><path d="M4 1 V13 M1 10 L4 14 L7 10" fill="none" stroke="#3a4a5a" stroke-width="1.3"/><text x="9" y="7" font-size="7" font-family="Liberation Sans" font-weight="bold" fill="#555">A</text><text x="9" y="15" font-size="7" font-family="Liberation Sans" font-weight="bold" fill="#c08020">Z</text></svg>
<svg style="left:229px;top:680px" width="19" height="16" viewBox="0 0 19 16"><path d="M4 1 V13 M1 10 L4 14 L7 10" fill="none" stroke="#3a4a5a" stroke-width="1.3"/><path d="M9 2 H17 M9 5 H17 M9 8 H17 M9 11 H17 M9 14 H15" stroke="#3a3a3a" stroke-width="1.2"/></svg>
<div class="a" style="left:3px;top:399px;width:408px;height:305px;border:1px solid #878b96"></div>
<div class="a" style="left:415px;top:88px;width:88px;height:19px;border:1px solid #878b96;background:linear-gradient(#f6f6f6,#e6e6e6)"></div>
<div class="a" style="left:502px;top:88px;width:98px;height:19px;border:1px solid #878b96;background:linear-gradient(#f6f6f6,#e6e6e6)"></div>
<div class="a" style="left:599px;top:87px;width:138px;height:20px;border:1px solid #878b96;border-bottom:none;background:#fff"></div>
<div class="t" style="left:422px;top:90px;font-size:11.5px">Start Page</div>
<svg style="left:489px;top:93px" width="9" height="9" viewBox="0 0 9 9"><path d="M0.8 0.8 L7.7 7.7 M7.7 0.8 L0.8 7.7" stroke="#3a3a3a" stroke-width="1.1"/></svg>
<svg style="left:507px;top:89px" width="15" height="16" viewBox="0 0 15 16"><path d="M1.5 0.5 H9.5 L13.5 4.5 V15.5 H1.5 Z" fill="#dfe6ee" stroke="#7a8694" stroke-width="0.9"/><path d="M9.5 0.5 V4.5 H13.5" fill="#f4f6f8" stroke="#7a8694" stroke-width="0.9"/><path d="M7 3.5 L9.5 6 L7 8.5 L4.5 6Z" fill="#f0b050" stroke="#a06010" stroke-width="0.6"/><rect x="3" y="7.5" width="5" height="5" fill="#90b8e0" stroke="#406890" stroke-width="0.6"/><circle cx="9.5" cy="10.5" r="2.8" fill="#f08080" stroke="#a04040" stroke-width="0.6"/></svg>
<div class="t" style="left:526px;top:90px;font-size:12px;font-weight:bold">Box.java</div>
<svg style="left:586px;top:93px" width="9" height="9" viewBox="0 0 9 9"><path d="M0.8 0.8 L7.7 7.7 M7.7 0.8 L0.8 7.7" stroke="#3a3a3a" stroke-width="1.1"/></svg>
<svg style="left:603px;top:88px" width="18" height="18" viewBox="0 0 18 18"><path d="M1.5 0.5 H10 L14.5 5 V15.5 H1.5 Z" fill="#dfe6ee" stroke="#8a96a4" stroke-width="0.9"/><path d="M10 0.5 V5 H14.5" fill="#f4f6f8" stroke="#8a96a4" stroke-width="0.9"/><path d="M7 4 L10 7 L7 10 L4 7Z" fill="#f0b050" stroke="#a06010" stroke-width="0.6"/><rect x="3" y="8" width="5" height="5" fill="#90b8e0" stroke="#406890" stroke-width="0.6"/><circle cx="9.5" cy="11" r="2.8" fill="#f08080" stroke="#a04040" stroke-width="0.6"/><path d="M11 7 L16 11 L11 15Z" fill="#6fd04a" stroke="#2a8a1a" stroke-width="0.7"/><g transform="translate(0,9)"><path d="M2.5 0.3 H5.5 L8 2.8 V5.8 L5.5 8.3 H2.5 L0 5.8 V2.8 Z" fill="#d81818" stroke="#8a0000" stroke-width="0.6"/><rect x="3.2" y="1.5" width="1.6" height="3.6" fill="#fff"/><rect x="3.2" y="5.7" width="1.6" height="1.4" fill="#fff"/></g></svg>
<div class="t" style="left:623px;top:90px;font-size:12px;font-weight:bold">BoxDemo5.java</div>
<svg style="left:723px;top:93px" width="9" height="9" viewBox="0 0 9 9"><path d="M0.8 0.8 L7.7 7.7 M7.7 0.8 L0.8 7.7" stroke="#3a3a3a" stroke-width="1.1"/></svg>
<svg style="left:1298px;top:89px" width="6" height="10" viewBox="0 0 6 10"><path d="M5 0 V9 L0.5 4.5Z" fill="#c4c4c4"/></svg>
<svg style="left:1316px;top:89px" width="6" height="10" viewBox="0 0 6 10"><path d="M0.5 0 V9 L5 4.5Z" fill="#c4c4c4"/></svg>
<svg style="left:1331px;top:91px" width="11" height="6" viewBox="0 0 11 6"><path d="M0 0 H11 L5.5 5.5Z" fill="#404040"/></svg>
<svg style="left:1350px;top:90px" width="11" height="9" viewBox="0 0 11 9"><rect x="0.5" y="0.5" width="10" height="8" fill="none" stroke="#404040"/><rect x="0.5" y="0.5" width="10" height="1.5" fill="#404040"/></svg>
<div class="a" style="left:415px;top:106px;width:948px;height:28px;border-left:1px solid #878b96;border-right:1px solid #878b96;background:#f0f0f0"></div>
<div class="a" style="left:600px;top:106px;width:136px;height:1px;background:#fff"></div>
<div class="a" style="left:415px;top:106px;width:185px;height:1px;background:#878b96"></div>
<div class="a" style="left:736px;top:106px;width:627px;height:1px;background:#878b96"></div>
<div class="a" style="left:416px;top:109px;width:52px;height:23px;border:1px solid #9ac8f0;background:#c5ddf3"></div>
<div class="t" style="left:425px;top:113px;font-size:11px">Source</div>
<div class="t" style="left:474px;top:113px;font-size:11px">History</div>
<div class="a" style="left:521px;top:111px;width:1px;height:19px;background:#9a9a9a"></div>
<div class="a" style="left:616px;top:111px;width:1px;height:19px;background:#9a9a9a"></div>
<div class="a" style="left:737px;top:111px;width:1px;height:19px;background:#9a9a9a"></div>
<div class="a" style="left:812px;top:111px;width:1px;height:19px;background:#9a9a9a"></div>
<div class="a" style="left:864px;top:111px;width:1px;height:19px;background:#9a9a9a"></div>
<div class="a" style="left:916px;top:111px;width:1px;height:19px;background:#9a9a9a"></div>
<svg style="left:527px;top:112px" width="19" height="17" viewBox="0 0 19 17"><rect x="1.5" y="1.5" width="13" height="14" fill="#dce9f4" stroke="#3a4a5a" stroke-width="1.2"/><path d="M3 3.5 H5.5 M4.2 3.5 V13.5 M3 13.5 H5.5" stroke="#3a4a5a" stroke-width="0.9"/><path d="M7 9 L11 5 V7.2 H15.5 C17.5 7.2,17.5 11,15.5 11 H11 V13 Z" fill="#f8c060" stroke="#b06010" stroke-width="0.9"/></svg>
<svg style="left:551px;top:112px" width="19" height="18" viewBox="0 0 19 18"><rect x="1.5" y="1.5" width="13" height="14" fill="#cfd0d2" stroke="#a8aaac" stroke-width="1"/><path d="M4 4.5 H12 M4 6.5 H7 M10 6.5 H12" stroke="#b0b2b4" stroke-width="0.8"/><path d="M6 12 L10 8 V10 H16 V14 H10 V16 Z" fill="#d8c8b0" stroke="#b8a890" stroke-width="0.8"/></svg>
<svg style="left:572px;top:119px" width="7" height="5" viewBox="0 0 7 5"><path d="M0 0 H7 L3.5 4Z" fill="#3a4a5a"/></svg>
<svg style="left:584px;top:112px" width="19" height="18" viewBox="0 0 19 18"><rect x="1.5" y="1.5" width="13" height="14" fill="#cfd0d2" stroke="#a8aaac" stroke-width="1"/><path d="M4 4.5 H12 M4 6.5 H7 M10 6.5 H12" stroke="#b0b2b4" stroke-width="0.8"/><path d="M12 12 L8 8 V10 H1 V14 H8 V16 Z" fill="#d8c8b0" stroke="#b8a890" stroke-width="0.8"/></svg>
<svg style="left:605px;top:119px" width="7" height="5" viewBox="0 0 7 5"><path d="M0 0 H7 L3.5 4Z" fill="#3a4a5a"/></svg>
<svg style="left:622px;top:112px" width="19" height="18" viewBox="0 0 19 18"><rect x="1.5" y="1.5" width="11" height="6" fill="#f0b868" stroke="#a06020" stroke-width="1"/><circle cx="9.5" cy="8.5" r="4.3" fill="#d4e6f4" stroke="#303840" stroke-width="1.3"/><path d="M7 8.5 H12" stroke="#90a8c0" stroke-width="0.8"/><path d="M12.5 11.5 L16.5 15.5" stroke="#101010" stroke-width="2.2"/></svg>
<svg style="left:646px;top:112px" width="17" height="16" viewBox="0 0 17 16"><rect x="2.5" y="0.5" width="12" height="5" fill="#f0b868" stroke="#a06828"/><path d="M1 10 L6 5.5 V8 H15 V12 H6 V14.5 Z" fill="#a0cef0" stroke="#2060b0"/></svg>
<svg style="left:669px;top:112px" width="17" height="16" viewBox="0 0 17 16"><rect x="2.5" y="0.5" width="12" height="5" fill="#f0b868" stroke="#a06828"/><path d="M16 10 L11 5.5 V8 H2 V12 H11 V14.5 Z" fill="#a0cef0" stroke="#2060b0"/></svg>
<svg style="left:692px;top:112px" width="17" height="16" viewBox="0 0 17 16"><rect x="0.5" y="0.5" width="11" height="6" fill="#f0b868" stroke="#a06828"/><rect x="4.5" y="9.5" width="11" height="6" fill="#c8c8c8" stroke="#606060"/><path d="M0.5 7 L4 14 M12 1 L16 9" stroke="#808080" stroke-width="0.6"/></svg>
<svg style="left:714px;top:112px" width="18" height="18" viewBox="0 0 18 18"><rect x="0.5" y="0.5" width="13" height="12" fill="none" stroke="#202020" stroke-dasharray="1.5 1.5"/><path d="M12 9 L17 13.5 L12 17Z" fill="#6a7a8a"/></svg>
<svg style="left:744px;top:112px" width="17" height="16" viewBox="0 0 17 16"><path d="M9 0.5 H14 L16.5 3 L14 5.5 H9 L6.5 3Z" fill="#a0d8f0" stroke="#3080a8" stroke-width="0.8"/><path d="M6 4 L11 9 H8 V15 H4 V9 H1 Z" fill="#f0b060" stroke="#a06010" stroke-width="0.8"/></svg>
<svg style="left:767px;top:112px" width="17" height="16" viewBox="0 0 17 16"><path d="M9 10.5 H14 L16.5 13 L14 15.5 H9 L6.5 13Z" fill="#a0d8f0" stroke="#3080a8" stroke-width="0.8"/><path d="M6 12 L11 7 H8 V1 H4 V7 H1 Z" fill="#f0b060" stroke="#a06010" stroke-width="0.8"/></svg>
<svg style="left:790px;top:112px" width="17" height="16" viewBox="0 0 17 16"><path d="M1 0.5 H8 L10 3 L8 5.5 H1Z" fill="#a0d8f0" stroke="#3080a8" stroke-width="0.8"/><path d="M7 10.5 H14 L16.5 13 L14 15.5 H7Z" fill="#d8d8d8" stroke="#707070" stroke-width="0.8"/><path d="M5 6 L9 10" stroke="#404040" stroke-dasharray="1 1"/></svg>
<svg style="left:818px;top:112px" width="18" height="18" viewBox="0 0 18 18"><path d="M1 7 L6.5 2 V4.5 H12 V9.5 H6.5 V12 Z" fill="#b0d8f4" stroke="#1a5a9a" stroke-width="1.1"/><path d="M14 3.5 H18 M14 5.5 H18 M14 7.5 H18 M14 9.5 H18 M14 11.5 H18 M3 13.5 H18 M3 15.5 H18" stroke="#303030" stroke-width="1" stroke-dasharray="1 0.5"/></svg>
<svg style="left:841px;top:112px" width="18" height="18" viewBox="0 0 18 18"><path d="M13 7 L7.5 2 V4.5 H2 V9.5 H7.5 V12 Z" fill="#b0d8f4" stroke="#1a5a9a" stroke-width="1.1"/><path d="M14 3.5 H18 M14 5.5 H18 M14 7.5 H18 M14 9.5 H18 M14 11.5 H18 M3 13.5 H18 M3 15.5 H18" stroke="#303030" stroke-width="1" stroke-dasharray="1 0.5"/></svg>
<svg style="left:872px;top:114px" width="14" height="14" viewBox="0 0 14 14"><defs><radialGradient id="rc" cx="0.4" cy="0.35" r="0.7"><stop offset="0" stop-color="#ffb0a8"/><stop offset="1" stop-color="#e85a50"/></radialGradient></defs><circle cx="7" cy="7" r="6" fill="url(#rc)" stroke="#b04a40" stroke-width="0.9"/></svg>
<svg style="left:895px;top:114px" width="14" height="14" viewBox="0 0 14 14"><defs><linearGradient id="gs" x1="0" y1="0" x2="0" y2="1"><stop offset="0" stop-color="#e0e0e0"/><stop offset="1" stop-color="#a8a8a8"/></linearGradient></defs><rect x="1.5" y="1.5" width="11" height="11" fill="url(#gs)" stroke="#606060" stroke-width="1"/></svg>
<svg style="left:923px;top:113px" width="17" height="17" viewBox="0 0 17 17"><path d="M1.5 8 L5 1.5 M4.5 8 L8 1.5 M7.5 8 L11 1.5" stroke="#30a010" stroke-width="1.6"/><path d="M12 4.5 H16 M12 6.5 H16 M12 8.5 H16 M1 10.5 H16 M1 12.5 H16 M1 14.5 H16" stroke="#303030" stroke-width="1" stroke-dasharray="1 0.5"/></svg>
<svg style="left:946px;top:113px" width="17" height="17" viewBox="0 0 17 17"><path d="M10 4.5 H16 M10 6.5 H16 M10 8.5 H16 M1 10.5 H16 M1 12.5 H16 M1 14.5 H16" stroke="#101010" stroke-width="1.1" stroke-dasharray="1 0.4"/></svg>
<svg style="left:1347px;top:115px" width="10" height="10" viewBox="0 0 10 10"><rect x="0.5" y="0.5" width="9" height="9" fill="#fff" stroke="#808080"/><path d="M5 1.5 V8.5 M1.5 5 H8.5" stroke="#202020" stroke-width="1.2"/><path d="M3 3 L7 7 M7 3 L3 7" stroke="#202020" stroke-width="0.7"/></svg>
<div class="a" style="left:415px;top:133px;width:948px;height:356px;border-left:1px solid #878b96;border-right:1px solid #878b96;background:#fff"></div>
<div class="a" style="left:416px;top:133px;width:946px;height:1px;background:#7a9cc4"></div>
<div class="a" style="left:415px;top:134px;width:1px;height:354px;background:#808080"></div>
<div class="a" style="left:416px;top:134px;width:27px;height:354px;background:#e9e8e2"></div>
<div class="a" style="left:443px;top:134px;width:1px;height:354px;background:#d8d8d4"></div>
<div class="a" style="left:473px;top:386px;width:859px;height:18px;background:#e9eff8"></div>
<div class="a" style="left:1113px;top:134px;width:1px;height:354px;background:#ffaaaa"></div>
<div class="a" style="left:473px;top:134px;width:1px;height:35px;background:repeating-linear-gradient(180deg,#c4c4c4 0 1px,transparent 1px 2px)"></div>
<div class="a" style="left:473px;top:242px;width:1px;height:216px;background:repeating-linear-gradient(180deg,#c4c4c4 0 1px,transparent 1px 2px)"></div>
<div class="a" style="left:456px;top:134px;width:1px;height:28px;background:#555"></div>
<div class="a" style="left:456px;top:161px;width:6px;height:1px;background:#555"></div>
<div class="a" style="left:451px;top:246px;width:11px;height:11px;border:1px solid #555;background:#fff"></div>
<div class="a" style="left:453px;top:251px;width:7px;height:1px;background:#555"></div>
<div class="a" style="left:456px;top:257px;width:1px;height:193px;background:#555"></div>
<div class="a" style="left:456px;top:449px;width:6px;height:1px;background:#555"></div>
<div class="a" style="left:481px;top:278px;width:26px;height:18px;background:#eae7a6"></div>
<div class="ln" style="top:134px">4</div>
<div class="code" style="left:473px;top:134px"> <span class="cm">* and open the template in the editor.</span></div>
<div class="ln" style="top:152px">5</div>
<div class="code" style="left:473px;top:152px"> <span class="cm">*/</span></div>
<div class="ln" style="top:170px">6</div>
<div class="code" style="left:473px;top:170px"><span class="kw">package</span> boxdemo5;</div>
<div class="ln" style="top:188px">7</div>
<div class="code" style="left:473px;top:188px"></div>
<div class="ln" style="top:206px">8</div>
<div class="code" style="left:473px;top:206px"></div>
<div class="ln" style="top:224px">9</div>
<div class="code" style="left:473px;top:224px"><span class="kw">class</span> <b>BoxDemo5</b> {</div>
<div class="ln" style="top:242px">10</div>
<div class="code" style="left:473px;top:242px"> <span class="kw">public</span> <span class="kw">static</span> <span class="kw">void</span> <b><i>main</i></b>(String args[]) {</div>
<div class="ln" style="top:260px">11</div>
<div class="code" style="left:473px;top:260px"> <span class="cm">// declare, allocate, and initialize Box objects</span></div>
<div class="code" style="left:473px;top:278px"> <i>Box</i> mybox1 = <span class="kw">new</span> <i>Box</i>(10, 20, 15);</div>
<div class="code" style="left:473px;top:296px"> <i>Box</i> mybox2 = <span class="kw">new</span> <i>Box</i>(3, 6, 9);</div>
<div class="ln" style="top:314px">14</div>
<div class="code" style="left:473px;top:314px"> <span class="kw">double</span> vol;</div>
<div class="ln" style="top:332px">15</div>
<div class="code" style="left:473px;top:332px"> <span class="cm">// get volume of first box</span></div>
<div class="ln" style="top:350px">16</div>
<div class="code" style="left:473px;top:350px"> vol = mybox1.<i>volume</i>();</div>
<div class="ln" style="top:368px">17</div>
<div class="code" style="left:473px;top:368px"> System.<span class="fld">out</span>.println(<span class="st">"Volume is "</span> + vol);</div>
<div class="ln" style="top:386px">18</div>
<div class="code" style="left:473px;top:386px"> <span class="cm">// get volume of second box</span></div>
<div class="ln" style="top:404px">19</div>
<div class="code" style="left:473px;top:404px"> vol = mybox2.<i>volume</i>();</div>
<div class="ln" style="top:422px">20</div>
<div class="code" style="left:473px;top:422px"> System.<span class="fld">out</span>.println(<span class="st">"Volume is "</span> + vol);</div>
<div class="ln" style="top:440px">21</div>
<div class="code" style="left:473px;top:440px"> }</div>
<div class="ln" style="top:458px">22</div>
<div class="code" style="left:473px;top:458px">}</div>
<div class="ln" style="top:476px">23</div>
<div class="code" style="left:473px;top:476px"></div>
<svg style="left:481px;top:293px" width="26" height="3" viewBox="0 0 26 3"><polyline points="0,2.5 2,0.5 4,2.5 6,0.5 8,2.5 10,0.5 12,2.5 14,0.5 16,2.5 18,0.5 20,2.5 22,0.5 24,2.5 26,0.5" fill="none" stroke="#ff0000" stroke-width="1"/></svg>
<svg style="left:617px;top:293px" width="26" height="3" viewBox="0 0 26 3"><polyline points="0,2.5 2,0.5 4,2.5 6,0.5 8,2.5 10,0.5 12,2.5 14,0.5 16,2.5 18,0.5 20,2.5 22,0.5 24,2.5 26,0.5" fill="none" stroke="#ff0000" stroke-width="1"/></svg>
<svg style="left:481px;top:311px" width="26" height="3" viewBox="0 0 26 3"><polyline points="0,2.5 2,0.5 4,2.5 6,0.5 8,2.5 10,0.5 12,2.5 14,0.5 16,2.5 18,0.5 20,2.5 22,0.5 24,2.5 26,0.5" fill="none" stroke="#ff0000" stroke-width="1"/></svg>
<svg style="left:617px;top:311px" width="26" height="3" viewBox="0 0 26 3"><polyline points="0,2.5 2,0.5 4,2.5 6,0.5 8,2.5 10,0.5 12,2.5 14,0.5 16,2.5 18,0.5 20,2.5 22,0.5 24,2.5 26,0.5" fill="none" stroke="#ff0000" stroke-width="1"/></svg>
<svg style="left:432px;top:281px" width="13" height="14" viewBox="0 0 13 14"><circle cx="5" cy="4.5" r="4.2" fill="#f6e27a" stroke="#b09a30" stroke-width="0.8"/><rect x="3" y="8.5" width="4" height="3.5" fill="#6a7a90"/><circle cx="9" cy="9" r="3.5" fill="#d81818" stroke="#900000" stroke-width="0.5"/><rect x="8.4" y="7" width="1.2" height="2.3" fill="#fff"/></svg>
<svg style="left:432px;top:299px" width="13" height="14" viewBox="0 0 13 14"><circle cx="5" cy="4.5" r="4.2" fill="#f6e27a" stroke="#b09a30" stroke-width="0.8"/><rect x="3" y="8.5" width="4" height="3.5" fill="#6a7a90"/><circle cx="9" cy="9" r="3.5" fill="#d81818" stroke="#900000" stroke-width="0.5"/><rect x="8.4" y="7" width="1.2" height="2.3" fill="#fff"/></svg>
<div class="a" style="left:1333px;top:134px;width:14px;height:354px;background:#f0f0f0"></div>
<div class="a" style="left:1333px;top:180px;width:15px;height:187px;background:#cdcdcd"></div>
<svg style="left:1336px;top:139px" width="9" height="7" viewBox="0 0 9 7"><path d="M1 5.5 L4.5 2 L8 5.5" fill="none" stroke="#505050" stroke-width="1.8"/></svg>
<svg style="left:1336px;top:476px" width="9" height="7" viewBox="0 0 9 7"><path d="M1 1.5 L4.5 5 L8 1.5" fill="none" stroke="#505050" stroke-width="1.8"/></svg>
<div class="a" style="left:1347px;top:134px;width:15px;height:354px;background:#f0f0f0"></div>
<div class="a" style="left:1352px;top:141px;width:8px;height:8px;background:#ff2a1a"></div>
<div class="a" style="left:1349px;top:257px;width:12px;height:3px;background:#ff2020"></div>
<div class="a" style="left:1349px;top:265px;width:12px;height:3px;background:#ff2020"></div>
<div class="a" style="left:1349px;top:314px;width:12px;height:1px;background:#606060"></div>
<div class="a" style="left:1354px;top:312px;width:2px;height:5px;background:#606060"></div>
<div class="a" style="left:415px;top:488px;width:948px;height:21px;border:1px solid #878b96;background:#f0f0f0"></div>
<svg style="left:425px;top:490px" width="17" height="17" viewBox="0 0 17 17"><rect x="0.5" y="7.5" width="9" height="8.5" fill="#b4d4ee" stroke="#4a6e92" stroke-width="0.9"/><path d="M7.5 1 L12.8 6.3 L7.5 11.6 L2.2 6.3Z" fill="#f2c468" stroke="#a87010" stroke-width="0.9"/><circle cx="11.5" cy="11.5" r="4.2" fill="#f6a8a8" stroke="#b05858" stroke-width="0.9"/></svg>
<div class="t" style="left:445px;top:491px;font-size:11px;letter-spacing:-0.1px">boxdemo5.BoxDemo5</div>
<svg style="left:557px;top:492px" width="10" height="13" viewBox="0 0 10 13"><path d="M1 1 L7 6.5 L1 12" fill="none" stroke="#606060" stroke-width="2.4"/><path d="M1 1 L7 6.5 L1 12" fill="none" stroke="#f0f0f0" stroke-width="0.8"/></svg>
<svg style="left:626px;top:492px" width="10" height="13" viewBox="0 0 10 13"><path d="M1 1 L7 6.5 L1 12" fill="none" stroke="#606060" stroke-width="2.4"/><path d="M1 1 L7 6.5 L1 12" fill="none" stroke="#f0f0f0" stroke-width="0.8"/></svg>
<svg style="left:582px;top:492px" width="13" height="13" viewBox="0 0 13 13"><circle cx="6.5" cy="7" r="5.4" fill="#f4a4a4" stroke="#b05858" stroke-width="0.9"/><rect x="5.6" y="1" width="1.8" height="12" fill="#fde6e6" stroke="#b05858" stroke-width="0.6"/></svg>
<div class="t" style="left:598px;top:491px;font-size:11px">main</div>
<svg style="left:1348px;top:494px" width="8" height="8" viewBox="0 0 8 8"><path d="M1 1 L7 7 M7 1 L1 7" stroke="#202020" stroke-width="2"/></svg>
<div class="a" style="left:415px;top:513px;width:948px;height:191px;border:1px solid #878b96;background:#fff"></div>
<div class="a" style="left:415px;top:513px;width:948px;height:21px;border:1px solid #878b96;border-right:1px solid #3c7fc8;background:linear-gradient(#f5f5f5,#e6e6e6)"></div>
<div class="a" style="left:415px;top:513px;width:136px;height:20px;background:#e9f1fb"></div>
<div class="a" style="left:415px;top:533px;width:948px;height:1px;background:#878b96"></div>
<div class="t" style="left:420px;top:517px;font-size:11.5px;font-weight:bold">Output - apple (run)</div>
<svg style="left:536px;top:520px" width="9" height="9" viewBox="0 0 9 9"><path d="M0.8 0.8 L7.7 7.7 M7.7 0.8 L0.8 7.7" stroke="#3a3a3a" stroke-width="1.1"/></svg>
<div class="a" style="left:1346px;top:523px;width:11px;height:2px;background:#3c3c3c"></div>
<div class="a" style="left:416px;top:534px;width:24px;height:169px;background:#f0f0f0"></div>
<div class="a" style="left:440px;top:534px;width:1px;height:169px;background:#a8a8a8"></div>
<svg style="left:418px;top:537px" width="18" height="17" viewBox="0 0 18 17"><path d="M1.5 1.5 L8.5 8.5 L1.5 15.5Z M8.5 1.5 L15.5 8.5 L8.5 15.5Z" fill="#7ad860" stroke="#208a10" stroke-width="1.1"/></svg>
<svg style="left:418px;top:559px" width="18" height="17" viewBox="0 0 18 17"><path d="M1.5 1.5 L8.5 8.5 L1.5 15.5Z M8.5 1.5 L15.5 8.5 L8.5 15.5Z" fill="#d8d870" stroke="#8a8a20" stroke-width="1.1"/></svg>
<svg style="left:420px;top:584px" width="14" height="14" viewBox="0 0 14 14"><rect x="0.5" y="0.5" width="13" height="13" fill="#d8baba" stroke="#b09090"/><rect x="5" y="5" width="4" height="4" fill="#eae2e2"/></svg>
<svg style="left:418px;top:604px" width="18" height="18" viewBox="0 0 18 18"><circle cx="3.5" cy="3.5" r="2.6" fill="none" stroke="#b08020" stroke-width="1.2"/><circle cx="3.5" cy="3.5" r="0.9" fill="#b08020"/><path d="M4 15 L11 8 M11 8 C10 5,12 3,14.5 3.5 L13 6 L14.5 7.5 L17 6 C17 9,15 10.5,12.5 10 M9 13 L14 16" fill="none" stroke="#4a5460" stroke-width="3.6" stroke-linecap="round" stroke-linejoin="round"/><path d="M4 15 L11 8 M11 8 C10 5,12 3,14.5 3.5 L13 6 L14.5 7.5 L17 6 C17 9,15 10.5,12.5 10 M9 13 L14 16" fill="none" stroke="#f0f2f4" stroke-width="1.6" stroke-linecap="round" stroke-linejoin="round"/></svg>
<div class="out" style="left:459px;top:539px"><span style="color:#808080">run:</span></div>
<div class="out" style="left:459px;top:555px"><span style="color:#0000e6;text-decoration:underline;text-underline-offset:2px">C:\Users\Asus\AppData\Local\NetBeans\Cache\8.1\executor-snippets\run.xml:48</span><span style="color:#e03000">:</span></div>
<div class="out" style="left:459px;top:571px"><span style="color:#c00000">Cancelled by user.</span></div>
<div class="out" style="left:459px;top:587px"><span style="color:#ff0000">BUILD FAILED (total time: 4 seconds)</span></div>
<div class="a" style="left:1346px;top:534px;width:16px;height:169px;background:#f0f0f0"></div>
<svg style="left:1349px;top:540px" width="10" height="7" viewBox="0 0 10 7"><path d="M1 5.5 L4.5 2 L8 5.5" fill="none" stroke="#505050" stroke-width="1.8"/></svg>
<svg style="left:1349px;top:690px" width="10" height="7" viewBox="0 0 10 7"><path d="M1 1.5 L4.5 5 L8 1.5" fill="none" stroke="#505050" stroke-width="1.8"/></svg>
<div class="a" style="left:415px;top:513px;width:948px;height:191px;border:1px solid #878b96"></div>
<div class="a" style="left:1362px;top:514px;width:1px;height:20px;background:#3c7fc8"></div>
<div class="a" style="left:415px;top:513px;width:136px;height:21px;border:1px solid #3c7fc8;border-bottom:none"></div>
<div class="a" style="left:0px;top:704px;width:1366px;height:24px;background:#f0f0f0"></div>
<div class="a" style="left:1228px;top:710px;width:1px;height:15px;background:#a0a0a0"></div>
<div class="a" style="left:1339px;top:710px;width:1px;height:15px;background:#a0a0a0"></div>
<div class="t" style="left:1272px;top:710px;font-size:11px">18:29</div>
<div class="t" style="left:1343px;top:710px;font-size:11px">INS</div>
<div class="a" style="left:0px;top:727px;width:1366px;height:1px;background:#e8e8e8"></div>
<div class="a" style="left:0px;top:728px;width:1366px;height:40px;background:radial-gradient(ellipse 300px 40px at 180px 755px,#141810 0%,#0a0b09 70%),#0a0b09"></div>
<div class="a" style="left:440px;top:728px;width:660px;height:40px;background:radial-gradient(ellipse 120px 30px at 170px 25px,rgba(30,36,20,0.8),rgba(0,0,0,0)),radial-gradient(ellipse 100px 25px at 500px 20px,rgba(26,30,20,0.7),rgba(0,0,0,0)),radial-gradient(ellipse 80px 20px at 380px 30px,rgba(22,26,16,0.6),rgba(0,0,0,0))"></div>
<div class="a" style="left:1148px;top:755px;width:210px;height:13px;background:rgba(50,50,50,0.3)"></div>
<svg style="left:16px;top:740px" width="17" height="17" viewBox="0 0 17 17"><path d="M0 2.4 L6.8 1.4 V7.8 H0Z M7.8 1.3 L16.5 0 V7.8 H7.8Z M0 8.8 H6.8 V15.2 L0 14.2Z M7.8 8.8 H16.5 V16.6 L7.8 15.4Z" fill="#fff"/></svg>
<svg style="left:64px;top:740px" width="17" height="17" viewBox="0 0 17 17"><circle cx="8" cy="8" r="6.8" fill="none" stroke="#fff" stroke-width="1.8"/></svg>
<svg style="left:109px;top:740px" width="22" height="16" viewBox="0 0 22 16"><rect x="4.5" y="1" width="13" height="14" fill="none" stroke="#fff" stroke-width="1.3"/><path d="M2.5 3 H0.8 V13 H2.5 M19.5 3 H21.2 V13 H19.5" fill="none" stroke="#fff" stroke-width="1.2"/></svg>
<svg style="left:159px;top:737px" width="22" height="22" viewBox="0 0 22 22"><path d="M3 13 C2 5,9 1,14 2 C19 3,21 7,21 12 H7.5 C8 17,14 19,20 16 V20 C12 23,3 20,3 13Z M7.5 9.5 H16 C15.5 6,10 5,7.5 9.5Z" fill="#1e88e5"/></svg>
<svg style="left:207px;top:738px" width="23" height="20" viewBox="0 0 23 20"><path d="M1 2 H8 L10 4 H22 V19 H1Z" fill="#e8c450"/><path d="M1 6 H22 V19 H1Z" fill="#f6d86e"/><path d="M6 11 H17 V19 H14 V15 H9 V19 H6Z" fill="#2aa0e0"/></svg>
<div class="a" style="left:199px;top:765px;width:40px;height:3px;background:#76b9ed"></div>
<svg style="left:256px;top:737px" width="22" height="22" viewBox="0 0 22 22"><path d="M7 6 C7 1,15 1,15 6" fill="none" stroke="#fff" stroke-width="1.3"/><path d="M2 6 H20 L19 21 L3 20Z" fill="#fff"/><path d="M6 10 H10 V13.5 H6Z M11 10 H15.5 V13.5 H11Z M6 14.5 H10 V18 H6Z M11 14.5 H15.5 V18 H11Z" fill="#111"/></svg>
<svg style="left:304px;top:736px" width="25" height="25" viewBox="0 0 25 25"><circle cx="12" cy="13" r="11" fill="#6aaa3a"/><circle cx="12" cy="13" r="5.5" fill="none" stroke="#fff" stroke-width="3"/><path d="M14 2 L16 9 M20 4 L17 10 M23 9 L18 12" stroke="#f06020" stroke-width="2.2"/><path d="M13 1 L24 1 L24 12Z" fill="#fff" opacity="0.0"/></svg>
<div class="a" style="left:297px;top:765px;width:40px;height:3px;background:#76b9ed"></div>
<div class="a" style="left:342px;top:728px;width:48px;height:40px;background:#3d3d3d"></div>
<svg style="left:354px;top:737px" width="24" height="24" viewBox="0 0 24 24"><path d="M12 1.5 L21.5 6.5 V17.5 L12 22.5 L2.5 17.5 V6.5Z" fill="#bcd4ee" stroke="#1f2a60" stroke-width="1.6"/><path d="M3.5 7 L12 11.5 L20.5 7 L12 2.5Z" fill="#d8e8ee"/><path d="M12 11.5 L20.5 7 V17 L12 21.5Z" fill="#e4eef4"/><path d="M3.5 7 L12 11.5 V21.5 L3.5 17Z" fill="#8aaede"/></svg>
<div class="a" style="left:342px;top:765px;width:48px;height:3px;background:#76b9ed"></div>
<div class="a" style="left:391px;top:728px;width:48px;height:40px;background:#b15b18"></div>
<svg style="left:405px;top:737px" width="22" height="24" viewBox="0 0 22 24"><path d="M1 4 L9 1 V20 L1 23Z" fill="#f2d88a"/><path d="M2 4 L12 3 V20 L2 21Z" fill="#f8e6a8"/><path d="M8 18 C6 18,6 14,9 14 C9 11,14 10,15 13 C17 12,20 14,19 16 C21 16,21 19,19 19 H9Z" fill="#1a5fc8"/></svg>
<div class="a" style="left:391px;top:765px;width:48px;height:3px;background:#f07d1a"></div>
<svg style="left:1116px;top:744px" width="14" height="9" viewBox="0 0 14 9"><path d="M1 8 L7 2 L13 8" fill="none" stroke="#fff" stroke-width="1.3"/></svg>
<svg style="left:1138px;top:740px" width="18" height="17" viewBox="0 0 18 17"><rect x="0.5" y="0.5" width="16" height="16" fill="#5a84e0"/><rect x="1.5" y="1.5" width="14" height="14" fill="#88a8f0"/><path d="M12 4 C8 2,5 4,5 8.5 C5 13,8 15,12 13 M5 8.5 H11" fill="none" stroke="#e8f0ff" stroke-width="1.6"/></svg>
<svg style="left:1163px;top:743px" width="17" height="11" viewBox="0 0 17 11"><rect x="0.8" y="0.8" width="13.5" height="9" fill="none" stroke="#fff" stroke-width="1.2"/><rect x="2.5" y="2.5" width="4.5" height="5.5" fill="#fff"/><rect x="14.5" y="3.5" width="2" height="4" fill="#fff"/></svg>
<svg style="left:1189px;top:740px" width="16" height="16" viewBox="0 0 16 16"><path d="M1.5 14 C1.5 7,7 1.5,14 1.5 M4.5 14 C4.5 9,9 4.5,14 4.5 M7.5 14 C7.5 11,11 7.5,14 7.5 M10.5 14 C10.5 12.5,12.5 10.5,14 10.5" fill="none" stroke="#fff" stroke-width="1.2"/><rect x="11" y="11" width="4" height="4" fill="#fff"/></svg>
<svg style="left:1210px;top:740px" width="18" height="17" viewBox="0 0 18 17"><path d="M1 6 H4.5 L9 2 V15 L4.5 11 H1Z" fill="none" stroke="#fff" stroke-width="1.2"/><path d="M11.5 5.5 C13 7,13 10,11.5 11.5 M13.5 3.5 C16 6,16 11,13.5 13.5 M15.5 1.5 C19 5,19 12,15.5 15.5" fill="none" stroke="#fff" stroke-width="1.1"/></svg>
<svg style="left:1235px;top:740px" width="17" height="18" viewBox="0 0 17 18"><path d="M0.5 0.5 H16.5 V13 H10 L8.5 16.5 L7 13 H0.5Z" fill="#fff"/><path d="M3.5 4 H13.5 M3.5 6.8 H13.5 M3.5 9.6 H10" stroke="#111" stroke-width="1.2"/></svg>
<div class="t" style="left:1261px;top:741px;font-size:12px;color:#fff">ENG</div>
<div class="t" style="left:1305px;top:732px;font-size:12px;color:#fff">9:37 PM</div>
<div class="t" style="left:1300px;top:749px;font-size:12px;color:#fff">9/28/2016</div>
<div class="a" style="left:1361px;top:728px;width:1px;height:40px;background:#3a3a3a"></div>
</body></html>
